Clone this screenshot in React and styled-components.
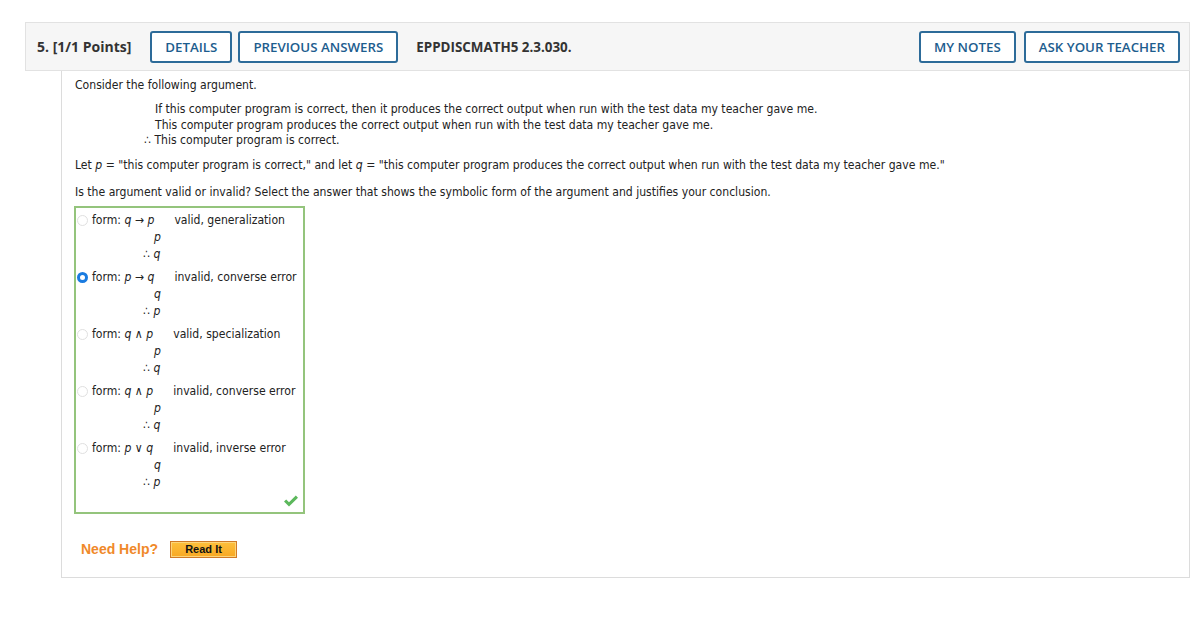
import React from "react";
import styled, { createGlobalStyle } from "styled-components";

const GlobalStyle = createGlobalStyle`
  body {
    margin: 0;
    background: #fff;
  }
`;

const options = [
  { form: ["q", "→", "p"], second: "p", third: "q", label: "valid, generalization" },
  { form: ["p", "→", "q"], second: "q", third: "p", label: "invalid, converse error", checked: true },
  { form: ["q", "∧", "p"], second: "p", third: "q", label: "valid, specialization" },
  { form: ["q", "∧", "p"], second: "p", third: "q", label: "invalid, converse error" },
  { form: ["p", "∨", "q"], second: "q", third: "p", label: "invalid, inverse error" },
];

const Check = () => (
  <svg width="16" height="12" viewBox="0 0 16 12" xmlns="http://www.w3.org/2000/svg">
    <path d="M1 6.5 L3.2 4.4 L6 7.2 L12.8 0.6 L15 2.8 L6 11.5 Z" fill="#5cb85c" />
  </svg>
);

const App = () => (
  <Page>
    <GlobalStyle />
    <Header>
      <Points>5. [1/1 Points]</Points>
      <ButtonGroup>
        <HeadButton>DETAILS</HeadButton>
        <HeadButton>PREVIOUS ANSWERS</HeadButton>
      </ButtonGroup>
      <Code>EPPDISCMATH5 2.3.030.</Code>
      <Spacer />
      <ButtonGroup $gap={8}>
        <HeadButton>MY NOTES</HeadButton>
        <HeadButton>ASK YOUR TEACHER</HeadButton>
      </ButtonGroup>
    </Header>
    <Body>
      <Text>Consider the following argument.</Text>
      <Argument>
        <ArgLine>If this computer program is correct, then it produces the correct output when run with the test data my teacher gave me.</ArgLine>
        <ArgLine>This computer program produces the correct output when run with the test data my teacher gave me.</ArgLine>
        <ArgLine $therefore>∴ This computer program is correct.</ArgLine>
      </Argument>
      <Text $top={8}>
        Let <Var>p</Var> = "this computer program is correct," and let <Var>q</Var> = "this computer program produces the correct output when run with the test data my teacher gave me."
      </Text>
      <Text $top={11}>
        Is the argument valid or invalid? Select the answer that shows the symbolic form of the argument and justifies your conclusion.
      </Text>
      <Choices>
        {options.map((o, i) => (
          <Choice key={i}>
            <Radio $checked={o.checked} />
            <ChoiceBody>
              <ChoiceLine>
                form: <Var>{o.form[0]}</Var> {o.form[1]} <Var>{o.form[2]}</Var>
                <Label>{o.label}</Label>
              </ChoiceLine>
              <ChoiceLine $indent={62}><Var>{o.second}</Var></ChoiceLine>
              <ChoiceLine $indent={51}>∴ <Var>{o.third}</Var></ChoiceLine>
            </ChoiceBody>
          </Choice>
        ))}
        <CheckRow>
          <Check />
        </CheckRow>
      </Choices>
      <HelpRow>
        <Help>Need Help?</Help>
        <ReadIt>Read It</ReadIt>
      </HelpRow>
    </Body>
  </Page>
);

const Page = styled.div`
  padding: 22px 10px 0 25px;
  width: 1165px;
`;

const Header = styled.div`
  display: flex;
  align-items: center;
  height: 47px;
  padding: 0 9px 0 11px;
  background: #f6f6f6;
  border: 1px solid #e2e2e2;
  font-family: "Open Sans", sans-serif;
`;

const Points = styled.span`
  font-size: 14px;
  font-weight: 700;
  color: #333;
  margin-right: 19px;
`;

const ButtonGroup = styled.div`
  display: flex;
  gap: ${(p) => p.$gap || 6}px;
`;

const HeadButton = styled.button`
  height: 32px;
  padding: 0 13px;
  background: #fff;
  border: 2px solid #2d6b99;
  border-radius: 3px;
  color: #1d5d8e;
  font-family: "Open Sans", sans-serif;
  font-size: 13.3px;
  font-weight: 600;
`;

const Code = styled.span`
  font-size: 13.4px;
  font-weight: 700;
  color: #333;
  margin-left: 18px;
`;

const Spacer = styled.div`
  flex: 1;
`;

const Body = styled.div`
  margin-left: 36px;
  height: 500px;
  padding: 6px 13px 0 13px;
  border: 1px solid #dcdcdc;
  border-top: none;
  font-family: "DejaVu Sans Condensed", "DejaVu Sans", Verdana, sans-serif;
  font-stretch: condensed;
  font-size: 12.1px;
  color: #222;
`;

const Text = styled.p`
  margin: ${(p) => p.$top || 0}px 0 0;
  line-height: 16px;
`;

const Argument = styled.div`
  margin-top: 9px;
  padding-left: 80px;
`;

const ArgLine = styled.div`
  line-height: 15.5px;
  margin-left: ${(p) => (p.$therefore ? "-11px" : "0")};
`;

const Var = styled.i`
  font-style: oblique;
`;

const Choices = styled.div`
  margin: 6px 0 0 -1px;
  width: 226px;
  padding: 4px 0 5px 1px;
  border: 2px solid #94c47c;
  display: flex;
  flex-direction: column;
  gap: 6px;
`;

const Choice = styled.div`
  display: flex;
  align-items: flex-start;
  gap: 4px;
`;

const Radio = styled.span`
  box-sizing: border-box;
  flex: none;
  width: 11px;
  height: 11px;
  margin-top: 3px;
  border-radius: 50%;
  border: ${(p) => (p.$checked ? "3.5px solid #1a7be0" : "1px solid #e0e0e0")};
  background: #fff;
`;

const ChoiceBody = styled.div`
  display: flex;
  flex-direction: column;
`;

const ChoiceLine = styled.div`
  line-height: 17px;
  white-space: nowrap;
  padding-left: ${(p) => p.$indent || 0}px;
`;

const Label = styled.span`
  margin-left: 20px;
`;

const CheckRow = styled.div`
  display: flex;
  justify-content: flex-end;
  padding-right: 4px;
  margin-top: -2px;
`;

const HelpRow = styled.div`
  display: flex;
  align-items: center;
  gap: 12px;
  margin: 27px 0 0 6px;
`;

const Help = styled.span`
  font-family: "Liberation Sans", Arial, sans-serif;
  font-size: 14px;
  font-weight: 700;
  color: #f0892a;
`;

const ReadIt = styled.button`
  width: 67px;
  height: 17px;
  padding: 0;
  border: 1px solid #d07a26;
  box-shadow: inset 0 0 0 1px #fdd57a;
  background: linear-gradient(#fdc03c, #f8a823);
  font-family: "Liberation Sans", Arial, sans-serif;
  font-size: 11px;
  font-weight: 700;
  color: #111;
  line-height: 15px;
`;

export default App;
